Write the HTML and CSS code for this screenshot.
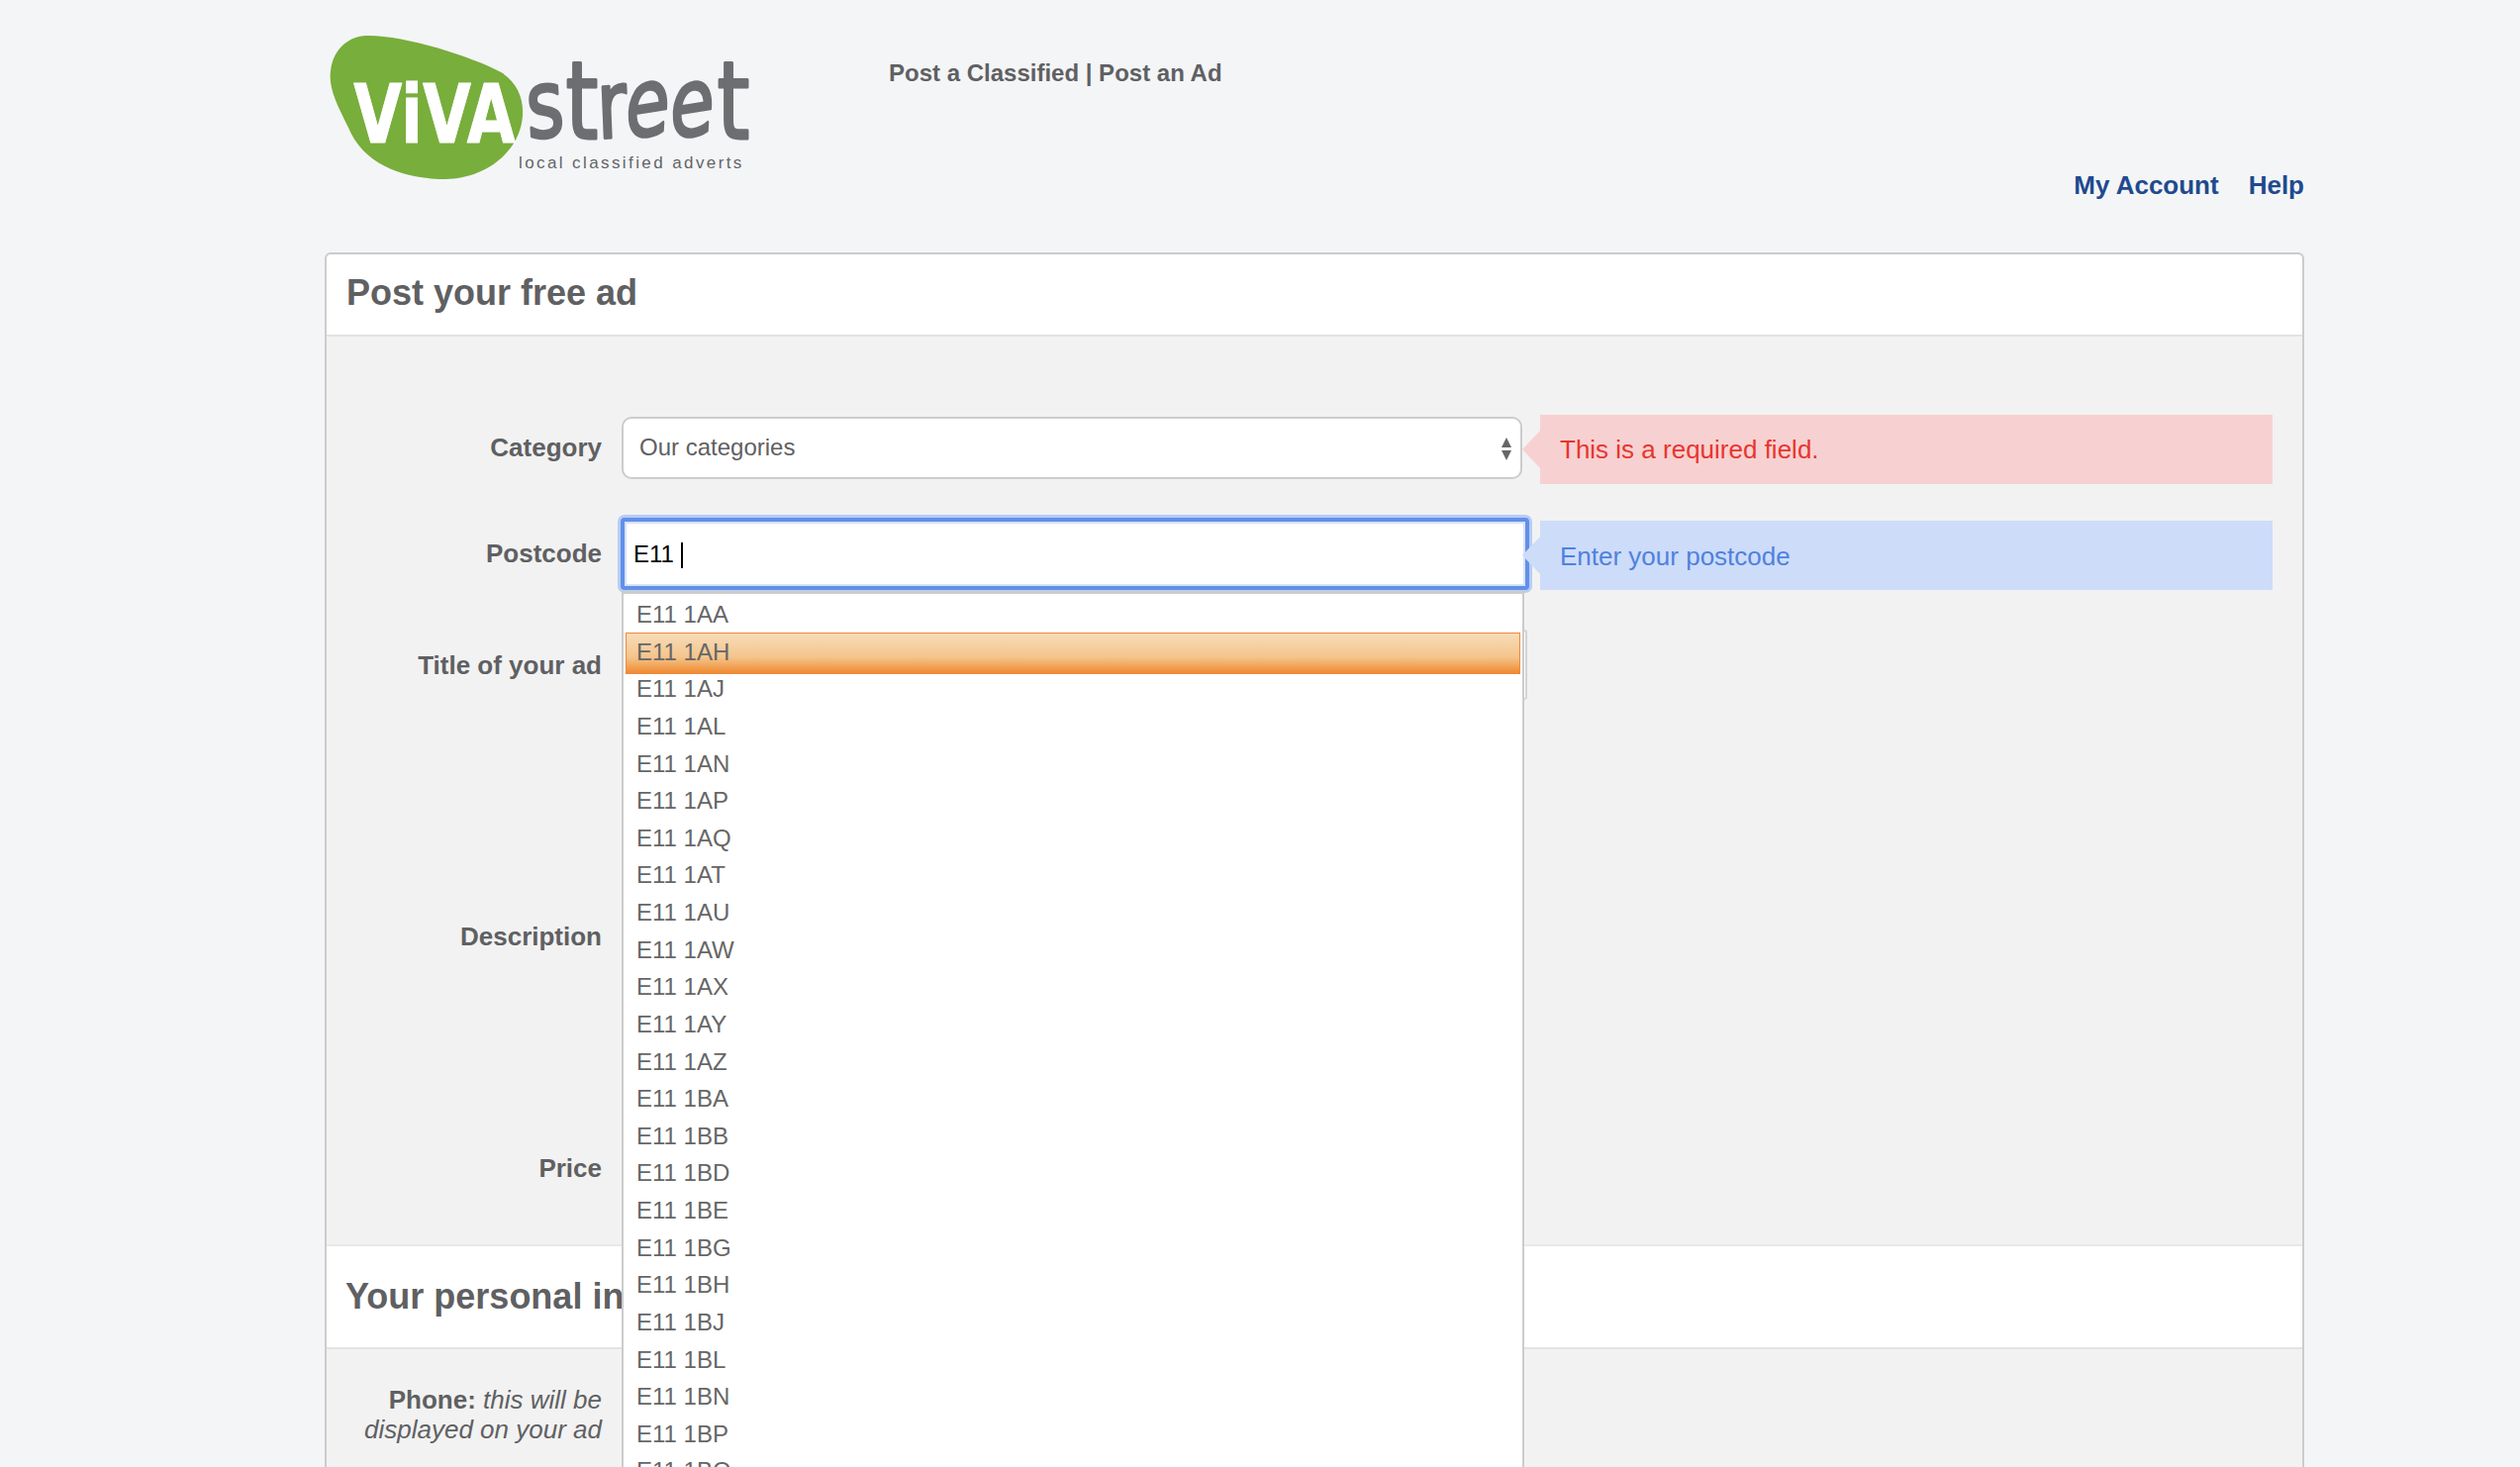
FILE: index.html
```html
<!DOCTYPE html>
<html lang="en">
<head>
<meta charset="utf-8">
<title>Post your free ad - Vivastreet</title>
<link rel="stylesheet" href="styles.css">
</head>
<body>
<div class="page">
  <header class="site-header">
    <a class="logo" href="#" aria-label="Vivastreet">
      <svg class="logo-svg" viewBox="24 0 1290 495" xmlns="http://www.w3.org/2000/svg">
        <path class="logo-blob" d="M150 33C260 30 470 95 560 145C640 195 640 300 590 370C530 450 440 470 370 468C250 462 140 420 95 310C60 240 35 190 42 140C50 70 100 35 150 33Z"/>
        <text class="logo-viva" x="112" y="358" textLength="490" lengthAdjust="spacingAndGlyphs">ViVA</text>
        <text class="logo-street" x="640" y="345" textLength="672" lengthAdjust="spacingAndGlyphs" rotate="-4 0 -3 -7 -7 0"><tspan class="small">s</tspan><tspan>t</tspan><tspan class="small">r</tspan><tspan class="small slant">ee</tspan><tspan>t</tspan></text>
        <text class="logo-tag" x="612" y="434" textLength="676">local classified adverts</text>
      </svg>
    </a>
    <p class="tagline">Post a Classified | Post an Ad</p>
    <nav class="top-nav">
      <a href="#">My Account</a>
      <a href="#">Help</a>
    </nav>
  </header>

  <main class="panel">
    <h2 class="panel-title">Post your free ad</h2>
    <form class="form-body">
      <div class="row row-category">
        <label class="row-label label-raised">Category</label>
        <div class="control select-wrap">
          <select class="select"><option>Our categories</option></select>
        </div>
        <div class="message message-error">This is a required field.</div>
      </div>

      <div class="row row-postcode">
        <label class="row-label label-raised">Postcode</label>
        <div class="control postcode-wrap">
          <input class="postcode-input" type="text" value="E11 ">
          <span class="caret"></span>
          <ul class="suggest">
            <li>E11 1AA</li>
            <li class="active">E11 1AH</li>
            <li>E11 1AJ</li>
            <li>E11 1AL</li>
            <li>E11 1AN</li>
            <li>E11 1AP</li>
            <li>E11 1AQ</li>
            <li>E11 1AT</li>
            <li>E11 1AU</li>
            <li>E11 1AW</li>
            <li>E11 1AX</li>
            <li>E11 1AY</li>
            <li>E11 1AZ</li>
            <li>E11 1BA</li>
            <li>E11 1BB</li>
            <li>E11 1BD</li>
            <li>E11 1BE</li>
            <li>E11 1BG</li>
            <li>E11 1BH</li>
            <li>E11 1BJ</li>
            <li>E11 1BL</li>
            <li>E11 1BN</li>
            <li>E11 1BP</li>
            <li>E11 1BQ</li>
          </ul>
        </div>
        <div class="message message-info">Enter your postcode</div>
      </div>

      <div class="row row-title">
        <label class="row-label">Title of your ad</label>
        <div class="control"><input class="text-input title-input" type="text"></div>
      </div>

      <div class="row row-description">
        <label class="row-label">Description</label>
        <div class="control"><textarea class="text-input description-input"></textarea></div>
      </div>

      <div class="row row-price">
        <label class="row-label">Price</label>
        <div class="control"><input class="text-input price-input" type="text"></div>
      </div>
    </form>

    <h2 class="panel-title section-title">Your personal information</h2>
    <div class="form-body personal-body">
      <div class="row row-phone">
        <label class="row-label"><b>Phone:</b> <i>this will be displayed on your ad</i></label>
        <div class="control"><input class="text-input price-input" type="text"></div>
      </div>
    </div>
  </main>
</div>
</body>
</html>
```

FILE: styles.css
```css
* { box-sizing: border-box; }

html, body {
  margin: 0;
  height: 100%;
  overflow: hidden;
  background: #f4f5f7;
  font-family: "Liberation Sans", Arial, sans-serif;
  color: #5f6062;
}

.page {
  height: 100vh;
  overflow: hidden;
  padding: 0 218px 0 328px;
}

/* Header */
.site-header {
  display: flex;
  align-items: flex-start;
  height: 255px;
  padding-top: 25px;
}

.logo { display: block; flex: none; }
.logo-svg { display: block; width: 430px; height: 165px; }
.logo-blob { fill: #78ae3c; }
.logo-viva {
  font-family: "DejaVu Sans", sans-serif;
  font-weight: 700;
  font-size: 244px;
  fill: #fff;
  stroke: #fff;
  stroke-width: 3;
  stroke-linejoin: round;
}
.logo-street {
  font-family: "DejaVu Sans", sans-serif;
  font-size: 326px;
  fill: #6d6e71;
  stroke: #6d6e71;
  stroke-width: 9;
  stroke-linejoin: round;
}
.logo-street .small { font-size: 285px; }
.logo-street .slant { font-style: italic; }
.logo-tag {
  font-family: "Liberation Sans", sans-serif;
  font-size: 51px;
  fill: #636466;
}

.tagline {
  margin: 34px 0 0 140px;
  font-size: 24px;
  line-height: 30px;
  font-weight: 700;
  white-space: nowrap;
}

.top-nav {
  display: flex;
  gap: 30px;
  margin: 147px 0 0 auto;
}
.top-nav a {
  font-size: 26px;
  line-height: 30px;
  font-weight: 700;
  color: #1f4a8e;
  text-decoration: none;
}

/* Panel */
.panel {
  background: #f2f2f2;
  border: 2px solid #ccc;
  border-bottom: 0;
  border-radius: 6px 6px 0 0;
}

.panel-title {
  display: flex;
  align-items: center;
  height: 83px;
  margin: 0;
  padding: 0 20px 3px;
  background: #fff;
  border-bottom: 2px solid #e3e3e3;
  border-radius: 5px 5px 0 0;
  font-size: 36px;
  font-weight: 700;
}

.section-title {
  height: 106px;
  padding: 0 19px 1px;
  border-top: 2px solid #e8e8e8;
  border-radius: 0;
}

.form-body {
  display: flex;
  flex-direction: column;
  padding: 79px 0 48px;
}

.personal-body { padding-top: 36px; }

/* Rows */
.row {
  display: flex;
  align-items: center;
  font-size: 26px;
}

.row-category { height: 70px; margin-bottom: 37px; }
.row-postcode { height: 70px; margin-bottom: 40px; position: relative; z-index: 2; }
.row-title { height: 71px; margin-bottom: 49px; }
.row-description { height: 380px; margin-bottom: 15px; }
.row-price { height: 58px; }
.row-phone { align-items: flex-start; }

.row-label {
  flex: none;
  width: 278px;
  margin-right: 20px;
  text-align: right;
  font-weight: 700;
  line-height: 30px;
}
.row-phone .row-label { font-weight: 400; }
.label-raised { margin-top: -5px; }

.control {
  flex: none;
  width: 909px;
  margin-right: 19px;
  position: relative;
}

/* Category select */
.select-wrap { margin-top: -3px; }
.select-wrap::before,
.select-wrap::after {
  content: "";
  position: absolute;
  right: 10px;
  border-left: 5.5px solid transparent;
  border-right: 5.5px solid transparent;
  pointer-events: none;
}
.select-wrap::before { top: 21px; border-bottom: 10px solid #666; }
.select-wrap::after { top: 34px; border-top: 10px solid #666; }

.select {
  display: block;
  width: 910px;
  height: 63px;
  padding: 0 40px 2px 16px;
  appearance: none;
  background: #fff;
  border: 2px solid #ccc;
  border-radius: 10px;
  font: 24px "Liberation Sans", sans-serif;
  color: #5f6062;
}

/* Messages */
.message {
  position: relative;
  flex: none;
  width: 740px;
  height: 70px;
  padding: 2px 20px 0;
  display: flex;
  align-items: center;
  font-size: 26px;
}
.message::before {
  content: "";
  position: absolute;
  left: -18px;
  top: 16px;
  border-top: 19px solid transparent;
  border-bottom: 19px solid transparent;
  border-right: 18px solid;
}
.message-error { background: #f7d1d1; color: #e8352e; padding-top: 0; }
.message-error::before { border-right-color: #f7d1d1; }
.message-info { background: #cddcf9; color: #4f82dd; }
.message-info::before { border-right-color: #cddcf9; }

/* Postcode */
.postcode-wrap { height: 70px; }

.postcode-input {
  display: block;
  width: 918px;
  height: 73px;
  margin: -3px 0 0 -1px;
  padding: 0 0 0 9px;
  background: #fff;
  border: 4px solid #6290e8;
  border-radius: 4px;
  box-shadow: 0 0 0 3px #b7cdf4, inset 0 0 0 2px #d5e2f9;
  outline: 0;
  font: 24px "Liberation Sans", sans-serif;
  color: #000;
}

.caret {
  position: absolute;
  left: 60px;
  top: 22px;
  width: 2px;
  height: 26px;
  background: #000;
}

.suggest {
  position: absolute;
  left: 0;
  top: 71px;
  width: 912px;
  margin: 0;
  padding: 2px 2px 0;
  list-style: none;
  background: #fff;
  border: solid #ccc;
  border-width: 3px 2px 0;
  font-size: 24px;
  color: #666;
}
.suggest li {
  height: 37.64px;
  line-height: 37.64px;
  padding-left: 11px;
}
.suggest .active {
  height: 42.64px;
  margin: -1px 0 -4px;
  padding-top: 0;
  line-height: 37px;
  padding-left: 10px;
  position: relative;
  border: 1px solid #ee8a3c;
  background: linear-gradient(#f8dcb9, #f4c48c 60%, #ef8a30);
}

/* Plain inputs */
.text-input {
  display: block;
  background: #fff;
  border: 2px solid #d4d4d4;
  border-radius: 3px;
  font: 24px "Liberation Sans", sans-serif;
}
.title-input { width: 915px; height: 71px; }
.description-input { width: 900px; height: 380px; resize: none; }
.price-input { width: 400px; height: 58px; }
```
